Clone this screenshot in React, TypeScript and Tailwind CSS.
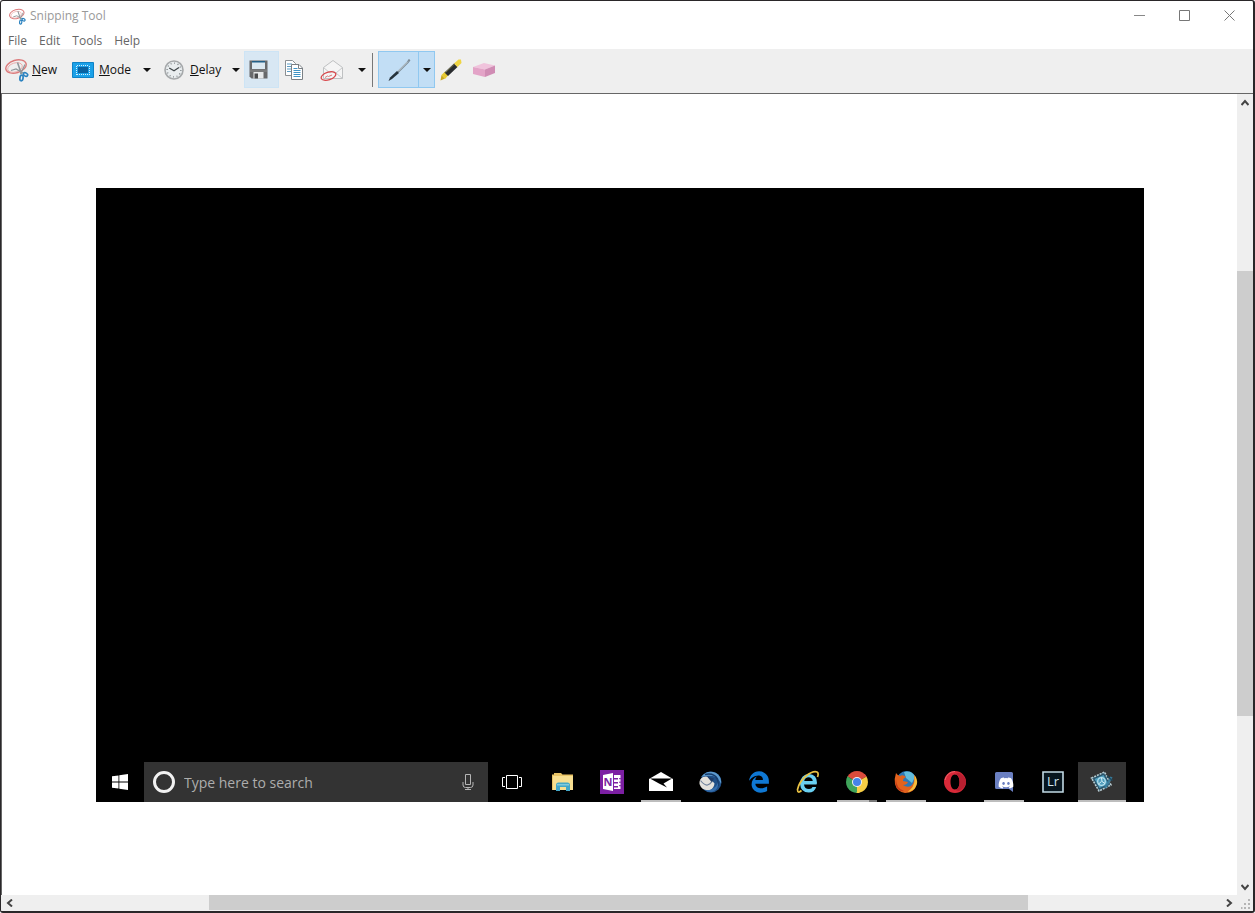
import type { ReactNode } from 'react';
import { FaDiscord, FaEdgeLegacy } from 'react-icons/fa';
import clsx from 'clsx';

function SnipIcon({ className }: { className: string }) {
  return (
    <svg viewBox="0 0 24 24" fill="none" className={className}>
      <ellipse cx="11" cy="8.500" rx="10.500" ry="6.300" transform="rotate(-17 11 8.500)" stroke="#dc7a7b" strokeWidth="1.400" />
      <ellipse cx="10" cy="9.500" rx="7.500" ry="4.500" transform="rotate(-17 10 9.500)" stroke="#e9a9a9" strokeWidth="0.900" />
      <path d="M12.500 4.500 16.500 16" stroke="#8f979b" strokeWidth="1.600" />
      <path d="M6 12.500 11 11l8 4.500M20 6.500 15.500 16" stroke="#8f979b" strokeWidth="1.300" />
      <ellipse cx="16.500" cy="20" rx="1.600" ry="2.800" transform="rotate(8 16.500 20)" stroke="#2c83c0" strokeWidth="1.700" />
      <ellipse cx="20.500" cy="16.500" rx="2.300" ry="1.600" transform="rotate(30 20.500 16.500)" stroke="#2c83c0" strokeWidth="1.700" />
    </svg>
  );
}

function ModeIcon() {
  return (
    <svg viewBox="0 0 22 16" className="h-4 w-[22px]">
      <path d="M.5.5h21v15H.5z" fill="#1ba1e8" stroke="#0f82c6" />
      <path d="M6 5h10v6H6z" fill="#0b62a0" />
      <path d="M5 3.500h12M5 12.500h12M4.500 4v9M17.500 4v9" stroke="#d8f1ff" strokeDasharray="1 1" />
    </svg>
  );
}

function ClockIcon() {
  return (
    <svg viewBox="0 0 20 20" fill="none" className="h-5 w-5">
      <circle cx="10" cy="10" r="9" fill="#e9edef" stroke="#a6a9ab" strokeWidth="1.600" />
      <circle cx="10" cy="10" r="6.900" stroke="#7e8588" strokeWidth="1.300" strokeDasharray="1 2.600" />
      <path d="m5.200 8 4.800 2.800 5-3.300" stroke="#42484b" strokeWidth="1.300" />
    </svg>
  );
}

function SaveIcon() {
  return (
    <svg viewBox="0 0 19 19" className="h-[19px] w-[19px]">
      <path d="M.5.5h18v18h-16l-2-2z" fill="#68696b" />
      <path d="M3 1h13v8H3z" fill="#dbe8f1" />
      <path d="M3 1h13v1.500H3z" fill="#235f87" />
      <path d="M4.500 12h10v6.500h-10z" fill="#e7e9ea" />
      <path d="M5.500 13.500H9v5H5.500z" fill="#4a4b4d" />
      <path d="M1 9.500h17V12H1z" fill="#7a7b7c" />
    </svg>
  );
}

function CopyIcon() {
  return (
    <svg viewBox="0 0 20 22" fill="none" className="h-[22px] w-5">
      <path d="M1.500 1.500h7l3 3v12h-10z" fill="#fff" stroke="#8a8f93" />
      <path d="M3 5h5M3 7.500h5M3 10h5M3 12.500h5" stroke="#5c9cc4" />
      <path d="M7.500 5.500H15L18.500 9v11.500h-11z" fill="#fff" stroke="#7a8085" />
      <path d="M14.500 5.500v4h4" stroke="#7a8085" />
      <path d="M9.500 9.500h4M9.500 11.500h7M9.500 13.500h7M9.500 15.500h7M9.500 17.500h7" stroke="#3f94c6" />
    </svg>
  );
}

function MailIcon() {
  return (
    <svg viewBox="0 0 24 22" fill="none" className="h-[22px] w-6">
      <path d="M3.500 8.500 13 1.500l9.500 7v11h-19z" fill="#f5f5f5" stroke="#bfc1c2" />
      <path d="m3.500 8.500 6.500 5.500M22.500 8.500 16 14M10 14l3-2 3 2 6.500 5.500" stroke="#c8cacb" />
      <ellipse cx="8.500" cy="17" rx="7.600" ry="3.800" transform="rotate(-18 8.500 17)" stroke="#d8474b" strokeWidth="1.300" />
      <path d="m5 18.500 2.500-1.500 1 .5 3.500-1.500" stroke="#dc7678" />
    </svg>
  );
}

function PenIcon() {
  return (
    <svg viewBox="0 0 24 24" fill="none" className="h-6 w-6">
      <path d="M11 14 21.500 3.500" stroke="#7d8d98" strokeWidth="1.800" />
      <path d="m11.500 13 9-9" stroke="#dce5eb" strokeWidth="0.800" />
      <circle cx="22" cy="2.500" r="1.200" fill="#7e8b95" />
      <path d="M1.500 23 3 19.500 10 13l2 2-7 6z" fill="#26333c" />
    </svg>
  );
}

function HighlighterIcon() {
  return (
    <svg viewBox="0 0 22 22" className="h-[22px] w-[22px]">
      <path d="m.5 21.500 1-5.500L5 19.500z" fill="#c9a820" />
      <path d="M1.500 16 5 12.500 8.500 16 5 20z" fill="#e8cb33" />
      <path d="M4.500 13.500 14 4.500l3.500 3.500L8 17z" fill="#292c2f" />
      <path d="M14 4.500 18.500.5h2.500L21.500 4l-4 4z" fill="#efd543" />
      <path d="m5.500 13.500 9-8.500" stroke="#77764e" />
    </svg>
  );
}

function EraserIcon() {
  return (
    <svg viewBox="0 0 24 16" className="h-4 w-6">
      <path d="M1 5 12 1l11 2.500-10 4z" fill="#f0c3dc" />
      <path d="m1 5 12 2.500V15L1 12z" fill="#e3a3c7" />
      <path d="m13 7.500 10-4V11l-10 4z" fill="#d08cb4" />
    </svg>
  );
}

function ExplorerIcon() {
  return (
    <svg viewBox="0 0 22 20" className="h-5 w-[22px]">
      <path d="M0 2.500h2V1h7l1.500 1.500H21V18H0z" fill="#e9c466" />
      <path d="M1 4h20v14H1z" fill="#f8df91" />
      <path d="M4 19v-6q0-2.500 2.500-2.500h9Q18 10.500 18 13v6h-4v-4H8v4z" fill="#43a8c9" />
      <path d="M5 12h12v1.500H5z" fill="#82cada" />
    </svg>
  );
}

function OneNoteIcon() {
  return (
    <svg viewBox="0 0 24 24" className="h-6 w-6">
      <path d="M0 0h24v24H0z" fill="#7c1fa3" />
      <path d="m3 5 10-2v18L3 19z" fill="#fff" />
      <text x="3.500" y="16" fontSize="11" fontWeight="bold" fontFamily="Open Sans, sans-serif" fill="#7c1fa3">N</text>
      <path d="M14 5h6.500v14H14v-1.500h4v-1.500h-4v-2.500h4V12h-4V9.500h4V8h-4z" fill="#fff" />
      <path d="M19 8.700h2M19 12.200h2M19 15.700h2" stroke="#7c1fa3" />
    </svg>
  );
}

function MailAppIcon() {
  return (
    <svg viewBox="0 0 24 20" className="h-5 w-6">
      <path d="M0 7 12 0l12 7v12H0z" fill="#fff" />
      <path d="M1 6.500h22l-8.500 5 3.500 4-8-4z" fill="#000" />
    </svg>
  );
}

function ThunderbirdIcon() {
  return (
    <svg viewBox="0 0 24 24" className="h-6 w-6">
      <circle cx="13" cy="12" r="10.500" fill="#1f4f87" />
      <path d="M3 7Q9-1 18 3q6 4 5 11-2-6-8-8-6-1-12 1z" fill="#5c9ace" />
      <path d="M7 4.500q9-2 13 5M17 6q4 4 3 10" fill="none" stroke="#173c6c" strokeWidth="1.400" />
      <path d="M1.500 14Q1 9 5 7q4-1.500 7 1 2 3 4.500 5.500-.500 4-4 6.500Q4 21.500 1.500 14z" fill="#e4e2dc" />
      <path d="M2.500 10.500q4 5 7 4.500 3-1 4-3" fill="none" stroke="#6d809b" strokeWidth="1.200" />
      <path d="m9 6.500 7 2-2 4z" fill="#1d3b66" />
      <path d="M14 19q5-2 6-7 1 7-5 9.500-5 1-9-1.500 4 1 8-1z" fill="#356fae" />
    </svg>
  );
}

function IEIcon() {
  return (
    <svg viewBox="0 0 24 24" fill="none" className="h-6 w-6">
      <path d="M20.500 14.500H8q.5 4.500 5 4.500 3 0 3.500-2h3.700q-1.700 5.500-7.500 5.500-8 0-8.700-8.700Q4.500 4.500 13 4q8 .5 8 9zM8.200 11h8.600q-.800-3.700-4.100-3.700Q9 7.300 8.200 11z" fill="#69d0f2" />
      <path d="M5.500 20.500Q1.500 24 1.500 19.500 3 12 10 6q7-5.500 11-4 2 1 .5 5" stroke="#e9c244" strokeWidth="1.700" />
    </svg>
  );
}

function ChromeIcon() {
  return (
    <svg viewBox="0 0 24 24" className="h-6 w-6">
      <path d="M12 12 2.500 6.500A11 11 0 0 1 21.500 6.500z" fill="#db4b3c" />
      <path d="M12 12 21.500 6.500A11 11 0 0 1 12 23z" fill="#f7ce45" />
      <path d="M12 12v11A11 11 0 0 1 2.500 6.500z" fill="#3fa45a" />
      <path d="M12 7h9.700q-.8-2-2.300-3H12z" fill="#db4b3c" />
      <path d="m16.300 14.500-4.900 8.500h2.600l5-6z" fill="#f7ce45" />
      <path d="M7.700 14.500 2.700 6l-1 3 3 7z" fill="#3fa45a" />
      <circle cx="12" cy="12" r="5" fill="#f3f3f3" />
      <circle cx="12" cy="12" r="4" fill="#4583e8" />
    </svg>
  );
}

function FirefoxIcon() {
  return (
    <svg viewBox="0 0 24 24" className="h-6 w-6">
      <circle cx="12.500" cy="11" r="10" fill="#2d78b5" />
      <path d="M10 2q8-2 11 5l-3 6-6-5z" fill="#62bcdc" />
      <path d="M2 3q-2 6-1 11 2 8 10 9 9 0 11.500-8 1-6-2.500-10 1 8-3 11-4 2-8-1 4 0 5-3l-5-1q0-3 3-4-3-3-6-1Q3 5 2 3z" fill="#e3621d" />
      <path d="M20.500 5q4 5 2 10-2 6-9 7 7-5 7-12z" fill="#f6bd3b" />
      <path d="M2 9q0 9 8 12-6 1-8-5-1-3 0-7z" fill="#c53c18" />
    </svg>
  );
}

function OperaIcon() {
  return (
    <svg viewBox="0 0 24 24" className="h-6 w-6">
      <path fillRule="evenodd" d="M12 1a11 11 0 1 0 0 22 11 11 0 0 0 0-22zm0 3.500c3 0 4.500 3.500 4.500 7.500s-1.500 7.500-4.500 7.500S7.500 16 7.500 12 9 4.500 12 4.500z" fill="#d92a39" />
      <path d="M12 4.500q4-3 7 .5 4 3 4 7t-4 7q-3 3.500-7 .5c3 0 4.500-3.500 4.500-7.500S15 4.500 12 4.500z" fill="#b81f30" />
      <path d="M12 1.500Q4 2 2 10" fill="none" stroke="#f0656c" />
    </svg>
  );
}

function DiscordIcon() {
  return (
    <svg viewBox="0 0 20 22" className="h-[22px] w-5">
      <path d="M2.500 1h15Q19 1 19 2.500V21l-4-3H2.500Q1 18 1 16.500v-14Q1 1 2.500 1z" fill="#6a7fc1" />
      <FaDiscord x="4" y="4" width="12" height="12" color="#fff" />
    </svg>
  );
}

function LightroomIcon() {
  return (
    <svg viewBox="0 0 22 22" className="h-[22px] w-[22px]">
      <path d="M1 1h20v20H1z" fill="#07161f" stroke="#c2dae5" strokeWidth="1.600" />
      <text x="5" y="15" fontSize="13" fontFamily="Open Sans, sans-serif" fill="#d2e6ef">Lr</text>
    </svg>
  );
}

function PhotoToolIcon() {
  return (
    <svg viewBox="0 0 24 22" fill="none" className="h-[22px] w-6">
      <path d="m1.500 7 13-6 6.500 13-12 6z" fill="#2a5368" stroke="#b7cbd1" strokeWidth="1.600" strokeDasharray="2 1" />
      <path d="m4.500 8 9-4 5 9-9 4z" fill="#4f9dbd" />
      <circle cx="11.500" cy="10.500" r="3.800" stroke="#b7e0ec" strokeWidth="1.300" />
      <path d="m11.500 7 .500 3.500 3 2M11.500 10.500 8.500 13" stroke="#d5eef5" />
      <path d="M15 17 21.500 6" stroke="#3a7d9d" strokeWidth="2.400" />
      <path d="m17 5 5.500 4.500" stroke="#1f4a5f" strokeWidth="1.600" />
    </svg>
  );
}

function StartIcon() {
  return (
    <svg viewBox="0 0 16 16" fill="#fff" className="h-4 w-4">
      <path d="m0 2.300 6.500-.9v6.200H0zM7.300 1.300 16 0v7.600H7.300zM0 8.400h6.500v6.200L0 13.700zM7.300 8.400H16V16l-8.700-1.300z" />
    </svg>
  );
}

function MicIcon() {
  return (
    <svg viewBox="0 0 12 18" fill="none" stroke="#b5b5b5" className="h-[18px] w-3">
      <path d="M3.500 1.500h5v10h-5zM1 9v3q0 2.500 2.500 2.500h5Q11 14.500 11 12V9M6 14.500v2M3 16.500h6" />
    </svg>
  );
}

function TaskViewIcon() {
  return (
    <svg viewBox="0 0 20 14" fill="none" stroke="#fff" className="h-[14px] w-5">
      <path d="M4.500.5h11v13h-11zM3 2.500H.5v9H3M17 2.500h2.500v9H17" />
    </svg>
  );
}

function DropArrow({ label, className }: { label: string; className?: string }) {
  return (
    <button aria-label={label} className={clsx('flex h-[37px] w-4 items-center justify-center', className)}>
      <svg viewBox="0 0 8 4" className="h-1 w-2">
        <path d="M0 0h8L4 4z" fill="#111" />
      </svg>
    </button>
  );
}

function Chevron({ label, d, className }: { label: string; d: string; className: string }) {
  return (
    <button aria-label={label} className={clsx('flex shrink-0 items-center justify-center', className)}>
      <svg viewBox="0 0 8 8" fill="none" stroke="#444" strokeWidth="2" className="h-2 w-2">
        <path d={d} />
      </svg>
    </button>
  );
}

type App = {
  name: string;
  icon: ReactNode;
  state?: 'open' | 'stacked' | 'active';
};

const TASKBAR_APPS: App[] = [
  { name: 'File Explorer', icon: <ExplorerIcon /> },
  { name: 'OneNote', icon: <OneNoteIcon /> },
  { name: 'Mail', icon: <MailAppIcon />, state: 'open' },
  { name: 'Thunderbird', icon: <ThunderbirdIcon /> },
  { name: 'Edge', icon: <FaEdgeLegacy className="h-[22px] w-[22px] text-[#0f78d4]" /> },
  { name: 'Internet Explorer', icon: <IEIcon /> },
  { name: 'Chrome', icon: <ChromeIcon />, state: 'stacked' },
  { name: 'Firefox', icon: <FirefoxIcon />, state: 'open' },
  { name: 'Opera', icon: <OperaIcon /> },
  { name: 'Discord', icon: <DiscordIcon />, state: 'open' },
  { name: 'Lightroom', icon: <LightroomIcon /> },
  { name: 'Photo tool', icon: <PhotoToolIcon />, state: 'active' },
];

function Taskbar() {
  return (
    <div className="flex h-10 items-stretch">
      <button aria-label="Start" className="flex w-12 items-center justify-center">
        <StartIcon />
      </button>
      <label className="flex w-[344px] items-center bg-[#333] pl-[9px] pr-[14px]">
        <span className="h-[22px] w-[22px] shrink-0 rounded-full border-[3px] border-[#f2f2f2]" />
        <input
          type="text"
          aria-label="Search"
          placeholder="Type here to search"
          className="ml-[9px] min-w-0 flex-1 bg-transparent pt-0.5 text-sm text-white outline-none placeholder:text-[#adadad]"
        />
        <MicIcon />
      </label>
      <button aria-label="Task view" className="flex w-12 items-center justify-center">
        <TaskViewIcon />
      </button>
      <div className="ml-[3px] flex gap-px">
        {TASKBAR_APPS.map((app) => (
          <button
            key={app.name}
            aria-label={app.name}
            className={clsx('flex w-12 flex-col items-center', app.state === 'active' && 'bg-[#333]')}
          >
            <span className="flex flex-1 items-center pt-px">{app.icon}</span>
            <span className={clsx('flex h-0.5', app.state === 'active' ? 'w-12' : 'w-10')}>
              {app.state && <span className="flex-1 bg-[#bdbdbd]" />}
              {app.state === 'stacked' && <span className="w-2 bg-[#777]" />}
            </span>
          </button>
        ))}
      </div>
    </div>
  );
}

function TitleBar() {
  return (
    <header className="flex h-[30px] items-center justify-between pl-2 pr-px">
      <h1 className="flex items-center gap-1 text-xs text-[#999]">
        <SnipIcon className="h-[17px] w-[17px]" />
        Snipping Tool
      </h1>
      <div className="flex h-7 self-start">
        <button aria-label="Minimize" className="flex w-[45px] items-center justify-center">
          <svg viewBox="0 0 11 11" fill="none" stroke="#888" className="h-[11px] w-[11px]">
            <path d="M0 5.500h11" />
          </svg>
        </button>
        <button aria-label="Maximize" className="flex w-[45px] items-center justify-center">
          <svg viewBox="0 0 11 11" fill="none" stroke="#777" className="h-[11px] w-[11px]">
            <path d="M.5.5h10v10H.5z" />
          </svg>
        </button>
        <button aria-label="Close" className="flex w-[45px] items-center justify-center">
          <svg viewBox="0 0 11 11" fill="none" stroke="#777" className="h-[11px] w-[11px]">
            <path d="m.5.5 10 10M10.500.5l-10 10" />
          </svg>
        </button>
      </div>
    </header>
  );
}

function Toolbar() {
  return (
    <div className="flex h-11 items-start bg-[#efefef] pl-px pt-0.5 text-xs text-[#111]">
      <button className="flex h-[37px] w-[66px] items-center gap-[3px] pl-[3px]">
        <SnipIcon className="h-6 w-6" />
        <span><u>N</u>ew</span>
      </button>
      <button className="flex h-[37px] w-[71px] items-center gap-[5px] pl-1">
        <ModeIcon />
        <span><u>M</u>ode</span>
      </button>
      <DropArrow label="Mode options" />
      <button className="flex h-[37px] w-[73px] items-center gap-[6px] pl-[9px]">
        <ClockIcon />
        <span><u>D</u>elay</span>
      </button>
      <DropArrow label="Delay options" />
      <button aria-label="Save Snip" className="flex h-[37px] w-[35px] items-center border border-[#cde4f5] bg-[#d8e7f3] pl-1">
        <SaveIcon />
      </button>
      <button aria-label="Copy" className="flex h-[37px] w-[30px] items-center justify-center">
        <CopyIcon />
      </button>
      <button aria-label="Send Snip" className="flex h-[37px] w-[45px] items-center justify-center">
        <MailIcon />
      </button>
      <DropArrow label="Send options" />
      <div className="ml-0.5 mr-[5px] mt-0.5 h-[34px] w-px bg-[#777]" />
      <button aria-label="Pen" className="flex h-[37px] w-[41px] items-center justify-center border border-[#90c8f0] bg-[#c2def5]">
        <PenIcon />
      </button>
      <DropArrow label="Pen options" className="border border-l-0 border-[#90c8f0] bg-[#c2def5]" />
      <button aria-label="Highlighter" className="flex h-[37px] w-[31px] items-center justify-center">
        <HighlighterIcon />
      </button>
      <button aria-label="Eraser" className="flex h-[37px] w-9 items-center justify-center">
        <EraserIcon />
      </button>
    </div>
  );
}

export default function SnippingTool() {
  return (
    <div className="h-screen bg-white font-['Open_Sans',sans-serif]">
      <div className="flex h-full flex-col overflow-hidden rounded-[3px] border-b-2 border-l border-r-2 border-t border-[#2a2729] bg-white">
        <TitleBar />
        <nav className="flex h-[18px] items-center gap-3 pl-[7px] pt-0.5 text-xs text-[#666]">
          <button>File</button>
          <button>Edit</button>
          <button>Tools</button>
          <button>Help</button>
        </nav>
        <Toolbar />
        <div className="flex min-h-0 flex-1 border-l border-t border-[#666]">
          <main className="flex min-w-0 flex-1 p-[94px] pb-[93px] pr-[93px]">
            <div className="flex flex-1 flex-col justify-end bg-black">
              <Taskbar />
            </div>
          </main>
          <div className="flex w-4 flex-col bg-[#efefef]">
            <Chevron label="Scroll up" d="M.5 6 4 2l3.500 4" className="h-[17px]" />
            <div className="grow-[160]" />
            <div className="grow-[445] bg-[#cdcdcd]" />
            <div className="grow-[162]" />
            <Chevron label="Scroll down" d="M.5 2 4 6l3.500-4" className="h-[17px]" />
          </div>
        </div>
        <div className="flex h-4 bg-[#efefef]">
          <Chevron label="Scroll left" d="M6 .5 2 4l4 3.500" className="w-[17px]" />
          <div className="grow-[191]" />
          <div className="mb-px grow-[818] bg-[#cdcdcd]" />
          <div className="grow-[192]" />
          <Chevron label="Scroll right" d="m2 .5 4 3.500-4 3.500" className="w-[17px]" />
          <div className="flex w-4 items-end justify-end p-0.5">
            <svg viewBox="0 0 10 10" fill="#b5b5b5" className="h-2.5 w-2.5">
              <path d="M7 0h2v2H7zM7 4h2v2H7zM7 8h2v2H7zM3 4h2v2H3zM3 8h2v2H3zM0 8h1.500v2H0z" />
            </svg>
          </div>
        </div>
      </div>
    </div>
  );
}
